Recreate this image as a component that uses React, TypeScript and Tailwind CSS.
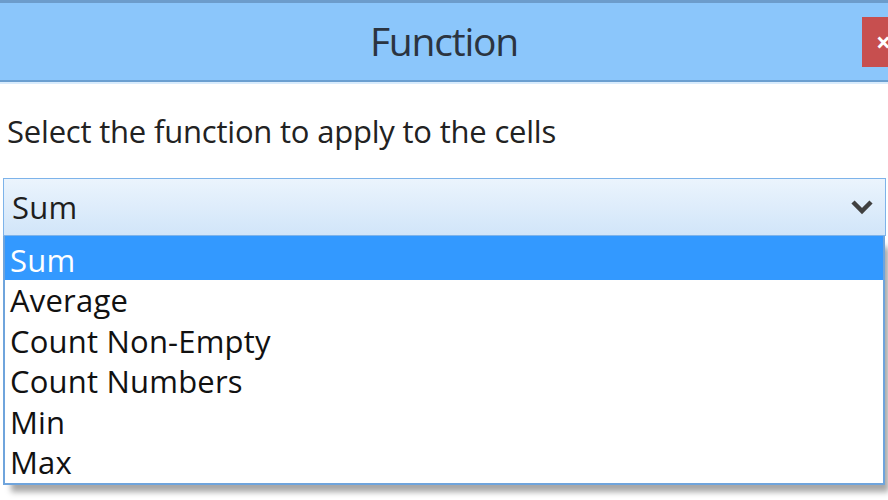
const options = ["Sum", "Average", "Count Non-Empty", "Count Numbers", "Min", "Max"];

export default function App() {
  return (
    <div
      className="relative h-[500px] w-[888px] overflow-hidden bg-white text-[#1e1e1e]"
      style={{ fontFamily: '"Open Sans", "Noto Sans", sans-serif' }}
    >
      {/* title bar */}
      <div className="border-t-[3px] border-b-2 border-t-[#6c9ccb] border-b-[#6b9fd0] bg-[#8bc6fb]">
        <div className="relative flex h-[77px] items-center justify-center">
          <span className="text-[39px] tracking-[-1.2px] text-[#2b3440]">Function</span>
          <div className="absolute left-[862px] top-[14px] flex h-[50px] w-[40px] items-center bg-[#c74f4f] pl-[14px] text-[26px] font-bold leading-none text-white">
            ×
          </div>
        </div>
      </div>
      <div className="h-[2px] bg-[#d9ecfd]" />

      <div className="px-[3px]">
        <p className="mt-[27px] pl-[4px] text-[31px] leading-[40px] tracking-[-0.2px] text-[#222]">
          Select the function to apply to the cells
        </p>

        {/* combo box */}
        <div className="mt-[27px] flex h-[58px] w-[883px] items-center justify-between border border-[#7db3ea] bg-gradient-to-b from-[#ebf4fd] to-[#d1e5f9] pl-[8px] pr-[12px]">
          <span className="text-[31px] tracking-[0.2px]">Sum</span>
          <svg width="22" height="16" viewBox="0 0 22 16">
            <path d="M2 3 L11 12 L20 3" fill="none" stroke="#404040" strokeWidth="4.5" />
          </svg>
        </div>

        {/* dropdown list */}
        <div className="w-[882px] border-2 border-t-0 border-[#6fa4dc] bg-white shadow-[6px_9px_6px_-2px_rgba(0,0,0,0.35)]">
          {options.map((o, i) => (
            <div
              key={o}
              className={
                "flex items-center pl-[5px] text-[31px] tracking-[0.2px] " +
                (i === 0 ? "h-[44px] pt-[4px] bg-[#3399ff] text-white" : "h-[40.5px] text-[#111]")
              }
            >
              {o}
            </div>
          ))}
        </div>
      </div>
    </div>
  );
}
